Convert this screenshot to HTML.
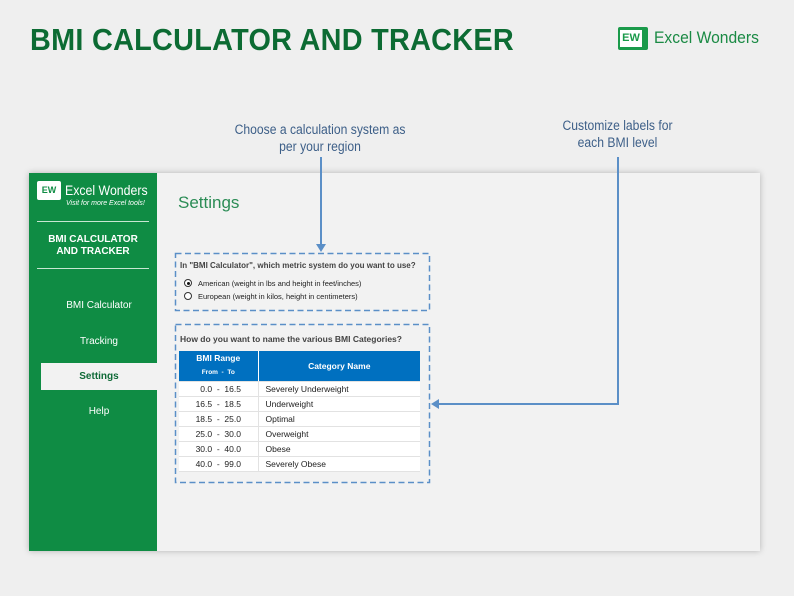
<!DOCTYPE html>
<html><head><meta charset="utf-8"><style>
*{margin:0;padding:0;box-sizing:border-box}
body{width:794px;height:596px;background:#efefef;position:relative;overflow:hidden;font-family:"Liberation Sans",sans-serif}
.a{position:absolute}
.title{left:30px;top:22px;font-size:31px;font-weight:bold;color:#0c6b33;letter-spacing:0.3px;transform:scaleX(0.93);transform-origin:left}
.ann{color:#3d5f88;font-size:13.5px;text-align:center;line-height:17px;transform:scaleX(0.9)}
.panel{left:29px;top:173px;width:731px;height:378px;background:#f2f2f2;box-shadow:0 0 6px rgba(0,0,0,.25)}
.side{left:29px;top:173px;width:128px;height:378px;background:#0f8c44}
.menu{color:#fff;font-size:10px;width:116px;left:41px;text-align:center}
table{border-collapse:collapse;font-size:8.5px;color:#222}
td{height:15px;border-bottom:1px solid #e2e2e2;background:#fff}
</style></head><body>
<div class="a title">BMI CALCULATOR AND TRACKER</div>
<div class="a" style="left:618px;top:27px;width:30px;height:23px;background:#1a9a4a;border-radius:2px"></div>
<div class="a" style="left:620px;top:30px;width:22px;height:17px;background:#fff;color:#1a9a4a;font-size:11px;font-weight:bold;line-height:17px;text-align:center">EW</div>
<div class="a" style="left:654px;top:28px;font-size:17px;color:#1a8a44;transform:scaleX(0.92);transform-origin:left">Excel Wonders</div>
<div class="a ann" style="left:210px;top:121px;width:220px">Choose a calculation system as<br>per your region</div>
<div class="a ann" style="left:530px;top:117px;width:175px">Customize labels for<br>each BMI level</div>
<div class="a panel"></div>
<div class="a side"></div>
<div class="a" style="left:37px;top:181px;width:24px;height:19px;background:#fff;border-radius:2px;color:#0f8c44;font-size:9px;font-weight:bold;text-align:center;line-height:19px">EW</div>
<div class="a" style="left:65px;top:182px;font-size:14px;color:#fff;transform:scaleX(0.88);transform-origin:left">Excel Wonders</div>
<div class="a" style="left:66px;top:200px;font-size:7px;color:#fff;font-style:italic">Visit for more Excel tools!</div>
<div class="a" style="left:37px;top:221px;width:112px;height:1px;background:#c8e6d2"></div>
<div class="a" style="left:37px;top:234px;width:112px;text-align:center;color:#fff;font-weight:bold;font-size:10px;line-height:12px">BMI CALCULATOR<br>AND TRACKER</div>
<div class="a" style="left:37px;top:268px;width:112px;height:1px;background:#c8e6d2"></div>
<div class="a menu" style="top:300px">BMI Calculator</div>
<div class="a menu" style="top:336px">Tracking</div>
<div class="a" style="left:41px;top:363px;width:116px;height:27px;background:#f2f2f2;color:#0f6a37;font-size:10px;font-weight:bold;text-align:center;line-height:27px">Settings</div>
<div class="a menu" style="top:406px">Help</div>
<div class="a" style="left:178px;top:193px;font-size:17px;color:#2b8c55">Settings</div>
<div class="a" style="left:180px;top:261px;font-size:8px;font-weight:bold;color:#444">In "BMI Calculator", which metric system do you want to use?</div>
<div class="a" style="left:184px;top:279px;width:8px;height:8px;border:1px solid #333;border-radius:50%;background:#fff"><div style="margin:1.5px;width:3px;height:3px;border-radius:50%;background:#111"></div></div>
<div class="a" style="left:184px;top:292px;width:8px;height:8px;border:1px solid #333;border-radius:50%;background:#fff"></div>
<div class="a" style="left:198px;top:279px;font-size:7.5px;color:#222">American (weight in lbs and height in feet/inches)</div>
<div class="a" style="left:198px;top:292px;font-size:7.5px;color:#222">European (weight in kilos, height in centimeters)</div>
<div class="a" style="left:180px;top:334px;font-size:8.5px;font-weight:bold;color:#444">How do you want to name the various BMI Categories?</div>
<div class="a" style="left:179px;top:351px">
<table style="width:241px">
<tr><td style="background:#0070c0;color:#fff;height:30px;width:79px;text-align:center;font-weight:bold;border-right:1px solid #fff;line-height:13px">BMI Range<br><span style="font-size:6.5px">From &nbsp;- &nbsp;To</span></td><td style="background:#0070c0;color:#fff;text-align:center;font-weight:bold">Category Name</td></tr>
<tr><td style="text-align:center;border-right:1px solid #e2e2e2">&nbsp;&nbsp;0.0 &nbsp;- &nbsp;16.5</td><td style="padding-left:7px">Severely Underweight</td></tr>
<tr><td style="text-align:center;border-right:1px solid #e2e2e2">16.5 &nbsp;- &nbsp;18.5</td><td style="padding-left:7px">Underweight</td></tr>
<tr><td style="text-align:center;border-right:1px solid #e2e2e2">18.5 &nbsp;- &nbsp;25.0</td><td style="padding-left:7px">Optimal</td></tr>
<tr><td style="text-align:center;border-right:1px solid #e2e2e2">25.0 &nbsp;- &nbsp;30.0</td><td style="padding-left:7px">Overweight</td></tr>
<tr><td style="text-align:center;border-right:1px solid #e2e2e2">30.0 &nbsp;- &nbsp;40.0</td><td style="padding-left:7px">Obese</td></tr>
<tr><td style="text-align:center;border-right:1px solid #e2e2e2">40.0 &nbsp;- &nbsp;99.0</td><td style="padding-left:7px">Severely Obese</td></tr>
</table></div>
<svg class="a" style="left:0;top:0" width="794" height="596">
<g stroke="#5b8fc7" stroke-width="1.5" fill="none" stroke-dasharray="6 3.5">
<rect x="175.5" y="253.5" width="254" height="57"/>
<rect x="175.5" y="324.5" width="254" height="158"/>
</g>
<g stroke="#5b8fc7" stroke-width="2" fill="none"><path d="M321 157V246"/><path d="M618 157V404H438"/></g>
<path d="M316 244L321 252L326 244Z" fill="#5b8fc7"/>
<path d="M439 399L431 404L439 409Z" fill="#5b8fc7"/>
</svg>
</body></html>
